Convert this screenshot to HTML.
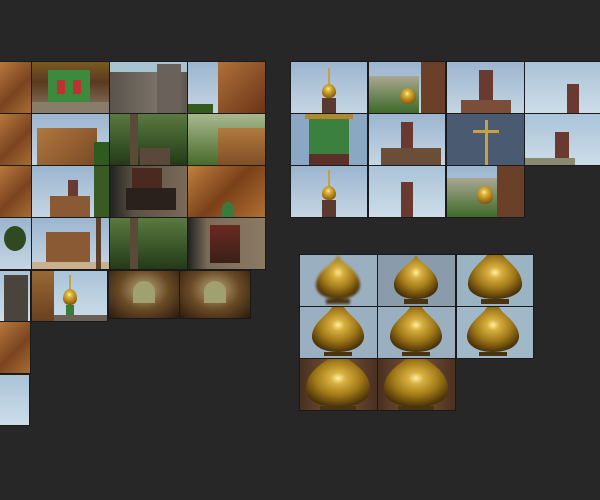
<!DOCTYPE html>
<html><head><meta charset="utf-8"><style>
html,body{margin:0;padding:0;width:600px;height:500px;background:#272727;overflow:hidden}
.t{position:absolute;overflow:hidden;box-shadow:0 0 0 1px #1a1a1a}
.t svg{position:absolute;left:0;top:0}
.sky{background:linear-gradient(#9bb5cf,#c5d6e3)}
.sky2{background:linear-gradient(#a9c3d8,#cddde8)}
.wood{background:linear-gradient(135deg,#b8783c,#7a4420 55%,#a86c34)}
.dome{position:absolute;border-radius:50% 50% 45% 45%/60% 60% 40% 40%;background:radial-gradient(circle at 45% 35%,#fff2a0 0%,#e0b840 18%,#a97a18 55%,#5e3e0a 100%)}
.roof{position:absolute;background:#6a3a30}
.grn{position:absolute;background:#3b7a3a}
.cross{position:absolute;background:#c9a040}
</style></head><body>
<svg width="0" height="0" style="position:absolute"><defs><radialGradient id="g" cx="0.5" cy="0.4" r="0.6"><stop offset="0" stop-color="#fff0a0"/><stop offset="0.2" stop-color="#d8b040"/><stop offset="0.6" stop-color="#a07818"/><stop offset="1" stop-color="#4a3208"/></radialGradient></defs></svg>
<div class="t wood" style="left:0;top:62px;width:31px;height:51px"></div>
<div class="t" style="left:32px;top:62px;width:77px;height:51px;background:linear-gradient(#7a5a20,#5a3a20 40%,#8a7a68)">
 <div style="position:absolute;left:16px;top:8px;width:42px;height:44px;background:#3c8a3c"><div style="position:absolute;left:9px;top:10px;width:8px;height:14px;background:#b33"></div><div style="position:absolute;left:25px;top:10px;width:8px;height:14px;background:#b33"></div></div>
 <div style="position:absolute;left:0;top:40px;width:77px;height:12px;background:#8a7c6a"></div></div>
<div class="t" style="left:110px;top:62px;width:77px;height:51px;background:linear-gradient(90deg,#5a544c,#7a7268 60%,#5e5850)"><div style="position:absolute;left:0;top:0;width:77px;height:10px;background:#a8c4d0"></div><div style="position:absolute;left:47px;top:2px;width:24px;height:49px;background:#6a625a"></div></div>
<div class="t sky" style="left:188px;top:62px;width:77px;height:51px"><div style="position:absolute;left:30px;top:0;width:47px;height:51px;background:linear-gradient(135deg,#b07038,#6a3418)"></div><div class="grn" style="left:0;top:42px;width:25px;height:9px;background:#355a20"></div></div>
<div class="t wood" style="left:0;top:114px;width:31px;height:51px"></div>
<div class="t sky" style="left:32px;top:114px;width:77px;height:51px"><div style="position:absolute;left:5px;top:14px;width:60px;height:37px;background:linear-gradient(135deg,#b07840,#7a4a24)"></div><div class="grn" style="left:62px;top:28px;width:15px;height:23px;background:#2f5a20"></div></div>
<div class="t" style="left:110px;top:114px;width:77px;height:51px;background:linear-gradient(#5a7a40,#243a18)"><div style="position:absolute;left:20px;top:0;width:8px;height:51px;background:#5a4a38"></div><div style="position:absolute;left:30px;top:34px;width:30px;height:17px;background:#5a483a"></div></div>
<div class="t" style="left:188px;top:114px;width:77px;height:51px;background:linear-gradient(#a8b890,#4a6a2a)"><div style="position:absolute;left:30px;top:14px;width:47px;height:37px;background:linear-gradient(#b07a40,#805024)"></div></div>
<div class="t wood" style="left:0;top:166px;width:31px;height:51px"></div>
<div class="t sky" style="left:32px;top:166px;width:77px;height:51px"><div class="roof" style="left:36px;top:14px;width:10px;height:20px"></div><div style="position:absolute;left:18px;top:30px;width:40px;height:21px;background:#8a5a34"></div><div class="grn" style="left:62px;top:0;width:15px;height:51px;background:#3a5a24"></div></div>
<div class="t" style="left:110px;top:166px;width:77px;height:51px;background:linear-gradient(90deg,#222,#5a5044 30%,#7a6a58)"><div style="position:absolute;left:22px;top:2px;width:30px;height:22px;background:#4a2a20"></div><div style="position:absolute;left:16px;top:22px;width:50px;height:22px;background:#2a201c"></div></div>
<div class="t" style="left:188px;top:166px;width:77px;height:51px;background:linear-gradient(135deg,#c08040,#7a4018 50%,#b07034)"><div class="grn" style="left:34px;top:36px;width:12px;height:15px;border-radius:50% 50% 0 0"></div></div>
<div class="t sky" style="left:0;top:218px;width:31px;height:51px"><div class="grn" style="left:4px;top:8px;width:22px;height:25px;border-radius:50%;background:#2f4a20"></div></div>
<div class="t sky" style="left:32px;top:218px;width:77px;height:51px"><div style="position:absolute;left:14px;top:14px;width:44px;height:30px;background:#8a5a34"></div><div style="position:absolute;left:0;top:44px;width:77px;height:7px;background:#c8b090"></div><div style="position:absolute;left:64px;top:0;width:5px;height:51px;background:#5a4028"></div></div>
<div class="t" style="left:110px;top:218px;width:77px;height:51px;background:linear-gradient(#5a7a40,#243a18)"><div style="position:absolute;left:20px;top:0;width:8px;height:51px;background:#5a4a38"></div></div>
<div class="t" style="left:188px;top:218px;width:77px;height:51px;background:linear-gradient(90deg,#222,#7a6a58 25%,#8a7a64)"><div style="position:absolute;left:22px;top:7px;width:30px;height:38px;background:linear-gradient(#6a2a20,#3a2018)"></div></div>
<div class="t sky2" style="left:0;top:271px;width:30px;height:50px"><div style="position:absolute;left:4px;top:4px;width:24px;height:46px;background:#4a443c"></div></div>
<div class="t sky2" style="left:32px;top:271px;width:75px;height:50px"><div style="position:absolute;left:0;top:0;width:22px;height:50px;background:linear-gradient(#986a34,#6a4020)"></div><div class="dome" style="left:31px;top:18px;width:14px;height:16px"></div><div style="position:absolute;left:34px;top:34px;width:8px;height:10px;background:#3a7a3a"></div><div class="cross" style="left:37px;top:4px;width:2px;height:14px"></div><div style="position:absolute;left:22px;top:44px;width:53px;height:6px;background:#6a6058"></div></div>
<div class="t" style="left:109px;top:271px;width:70px;height:47px;background:radial-gradient(ellipse at 50% 40%,#b8a880,#6a4a24 50%,#2a1a10)"><div style="position:absolute;left:24px;top:10px;width:22px;height:22px;border-radius:50% 50% 0 0;background:#a0a070"></div></div>
<div class="t" style="left:180px;top:271px;width:70px;height:47px;background:radial-gradient(ellipse at 50% 40%,#b8a880,#6a4a24 50%,#2a1a10)"><div style="position:absolute;left:24px;top:10px;width:22px;height:22px;border-radius:50% 50% 0 0;background:#a0a070"></div></div>
<div class="t wood" style="left:0;top:322px;width:30px;height:51px"></div>
<div class="t sky2" style="left:0;top:375px;width:29px;height:50px"></div>
<div class="t sky" style="left:291px;top:62px;width:76px;height:51px"><div class="dome" style="left:31px;top:22px;width:14px;height:14px"></div><div class="cross" style="left:37px;top:6px;width:2px;height:16px"></div><div style="position:absolute;left:31px;top:36px;width:14px;height:15px;background:#5a3a30"></div></div>
<div class="t sky" style="left:369px;top:62px;width:76px;height:51px"><div style="position:absolute;left:0;top:14px;width:50px;height:37px;background:linear-gradient(#a8a890,#3e6a2a)"></div><div class="dome" style="left:31px;top:26px;width:16px;height:16px"></div><div style="position:absolute;left:52px;top:0;width:24px;height:51px;background:#6a4028"></div></div>
<div class="t sky" style="left:447px;top:62px;width:77px;height:51px"><div class="roof" style="left:32px;top:8px;width:14px;height:30px"></div><div style="position:absolute;left:14px;top:38px;width:50px;height:13px;background:#7a4e38"></div></div>
<div class="t sky2" style="left:525px;top:62px;width:75px;height:51px"><div class="roof" style="left:42px;top:22px;width:12px;height:29px"></div></div>
<div class="t" style="left:291px;top:114px;width:76px;height:51px;background:#8aa8c4"><div style="position:absolute;left:18px;top:0;width:40px;height:51px;background:#3c8040"></div><div style="position:absolute;left:18px;top:40px;width:40px;height:11px;background:#5a3028"></div><div style="position:absolute;left:14px;top:0;width:48px;height:5px;background:#b08830"></div></div>
<div class="t sky" style="left:369px;top:114px;width:76px;height:51px"><div class="roof" style="left:32px;top:8px;width:12px;height:26px"></div><div style="position:absolute;left:12px;top:34px;width:60px;height:17px;background:#6a4e38"></div></div>
<div class="t" style="left:447px;top:114px;width:77px;height:51px;background:#4a5a70"><div class="cross" style="left:38px;top:6px;width:3px;height:45px"></div><div class="cross" style="left:26px;top:16px;width:26px;height:3px"></div></div>
<div class="t sky2" style="left:525px;top:114px;width:75px;height:51px"><div class="roof" style="left:30px;top:18px;width:14px;height:28px"></div><div style="position:absolute;left:0;top:44px;width:50px;height:7px;background:#8a8a70"></div></div>
<div class="t sky" style="left:291px;top:166px;width:76px;height:51px"><div class="dome" style="left:31px;top:20px;width:14px;height:14px"></div><div class="cross" style="left:37px;top:4px;width:2px;height:16px"></div><div style="position:absolute;left:31px;top:34px;width:14px;height:17px;background:#5a3a30"></div></div>
<div class="t sky2" style="left:369px;top:166px;width:76px;height:51px"><div class="roof" style="left:32px;top:16px;width:12px;height:35px"></div></div>
<div class="t sky" style="left:447px;top:166px;width:77px;height:51px"><div style="position:absolute;left:0;top:12px;width:50px;height:39px;background:linear-gradient(#a8a890,#3e6a2a)"></div><div class="dome" style="left:30px;top:20px;width:16px;height:18px"></div><div style="position:absolute;left:50px;top:0;width:27px;height:51px;background:#6a4028"></div></div>
<!-- bottom grid -->
<div class="t" style="left:300px;top:255px;width:77px;height:51px;background:#9ab0c0"><svg width="77" height="51" style="filter:blur(1.2px)"><path d="M38 0 C41 8 58 14 60 28 C61 38 52 44 38 44 C24 44 15 38 16 28 C18 14 35 8 38 0Z" fill="url(#g)"/><rect x="26" y="44" width="24" height="5" fill="#4a3410"/></svg></div>
<div class="t" style="left:378px;top:255px;width:77px;height:51px;background:#8a9cac"><svg width="77" height="51"><path d="M38 0 C41 8 58 14 60 28 C61 38 52 44 38 44 C24 44 15 38 16 28 C18 14 35 8 38 0Z" fill="url(#g)"/><rect x="26" y="44" width="24" height="5" fill="#4a3410"/></svg></div>
<div class="t" style="left:457px;top:255px;width:76px;height:51px;background:#9ab4c4"><svg width="76" height="51"><path d="M30 0 L46 0 C50 6 64 14 65 28 C66 38 54 44 38 44 C22 44 10 38 11 28 C12 14 26 6 30 0Z" fill="url(#g)"/><rect x="24" y="44" width="28" height="5" fill="#4a3410"/></svg></div>
<div class="t" style="left:300px;top:307px;width:77px;height:51px;background:#9ab0c0"><svg width="77" height="51"><path d="M32 0 L44 0 C48 8 62 14 64 28 C65 38 54 45 38 45 C22 45 11 38 12 28 C14 14 28 8 32 0Z" fill="url(#g)"/><rect x="24" y="45" width="28" height="4" fill="#4a3410"/></svg></div>
<div class="t" style="left:378px;top:307px;width:77px;height:51px;background:#9ab0c0"><svg width="77" height="51"><path d="M32 0 L44 0 C48 8 62 14 64 28 C65 38 54 45 38 45 C22 45 11 38 12 28 C14 14 28 8 32 0Z" fill="url(#g)"/><rect x="24" y="45" width="28" height="4" fill="#4a3410"/></svg></div>
<div class="t" style="left:457px;top:307px;width:76px;height:51px;background:#a0b8c8"><svg width="76" height="51"><path d="M30 0 L42 0 C46 8 60 14 62 28 C63 38 52 45 36 45 C20 45 9 38 10 28 C12 14 26 8 30 0Z" fill="url(#g)"/><rect x="22" y="45" width="28" height="4" fill="#4a3410"/></svg></div>
<div class="t" style="left:300px;top:359px;width:77px;height:51px;background:linear-gradient(90deg,#4a3020,#7a5438 50%,#4a3020)"><svg width="77" height="51"><path d="M28 0 L48 0 C56 6 70 14 70 30 C70 42 56 48 38 48 C20 48 6 42 6 30 C6 14 20 6 28 0Z" fill="url(#g)"/><rect x="20" y="47" width="36" height="4" fill="#4a3410"/></svg></div>
<div class="t" style="left:378px;top:359px;width:77px;height:51px;background:linear-gradient(90deg,#4a3020,#7a5438 50%,#4a3020)"><svg width="77" height="51"><path d="M28 0 L48 0 C56 6 70 14 70 30 C70 42 56 48 38 48 C20 48 6 42 6 30 C6 14 20 6 28 0Z" fill="url(#g)"/><rect x="20" y="47" width="36" height="4" fill="#4a3410"/></svg></div>
</body></html>
